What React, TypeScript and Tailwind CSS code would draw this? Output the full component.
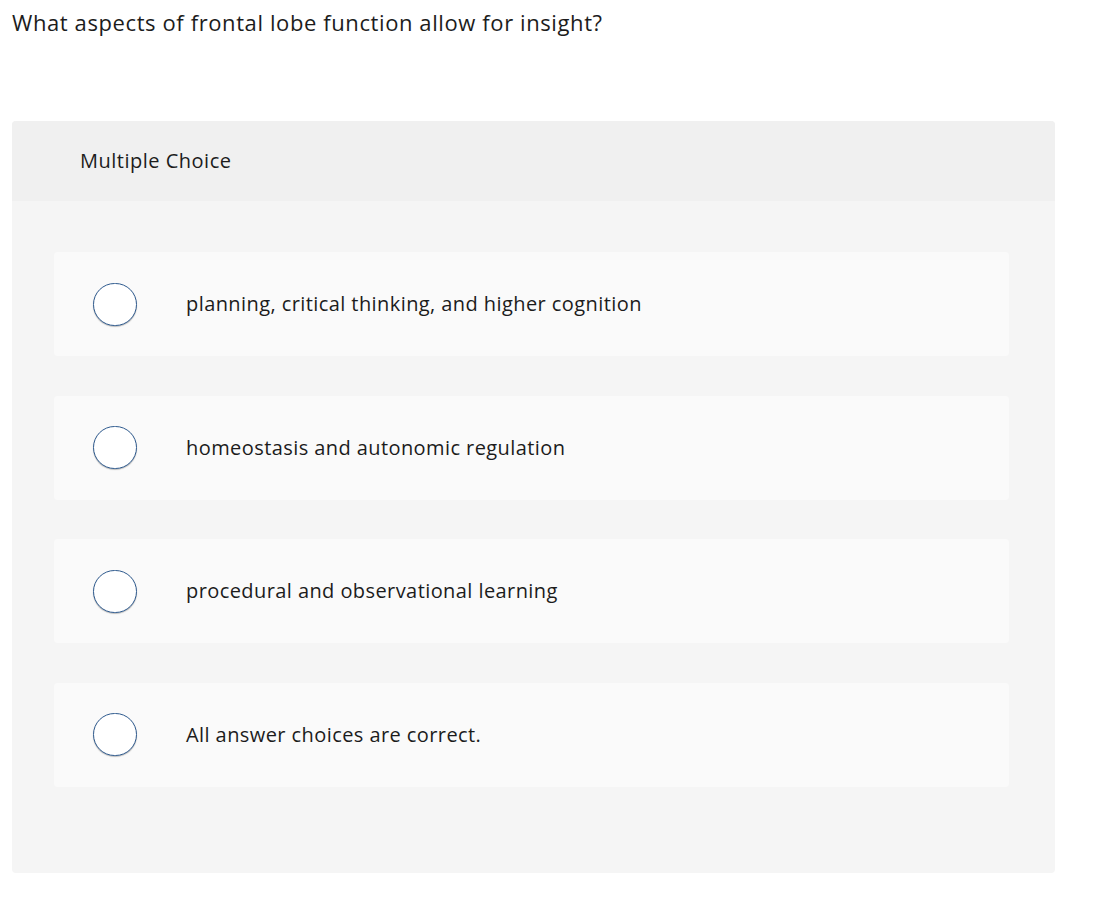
const options = [
  "planning, critical thinking, and higher cognition",
  "homeostasis and autonomic regulation",
  "procedural and observational learning",
  "All answer choices are correct.",
];

export default function App() {
  return (
    <div className="min-h-[900px] bg-white text-[#1c1c1c]" style={{ fontFamily: '"Open Sans", "Liberation Sans", sans-serif' }}>
      <h1 className="px-3 pt-[7px] text-[22px] leading-[30px] tracking-[0.6px]">What aspects of frontal lobe function allow for insight?</h1>

      <div className="mx-3 mt-[84px] w-[1043px] overflow-hidden rounded-[4px] bg-[#f5f5f5]">
        <div className="flex h-[80px] items-center bg-[#f0f0f0] pl-[68px] text-[20px] tracking-[0.5px]">Multiple Choice</div>
        <div className="flex flex-col gap-[39.5px] px-[42px] pt-[51px] pb-[86px]">
          {options.map((o) => (
            <label key={o} className="flex h-[104px] w-[955px] cursor-pointer items-center rounded-[4px] bg-[#fafafa]">
              <span className="ml-[39px] h-[43px] w-[44px] shrink-0 rounded-full border border-[#2f5b8f] bg-white shadow-[0_1px_1px_rgba(0,0,0,0.25)]" />
              <span className="ml-[49px] text-[20px] tracking-[0.42px]">{o}</span>
            </label>
          ))}
        </div>
      </div>
    </div>
  );
}
